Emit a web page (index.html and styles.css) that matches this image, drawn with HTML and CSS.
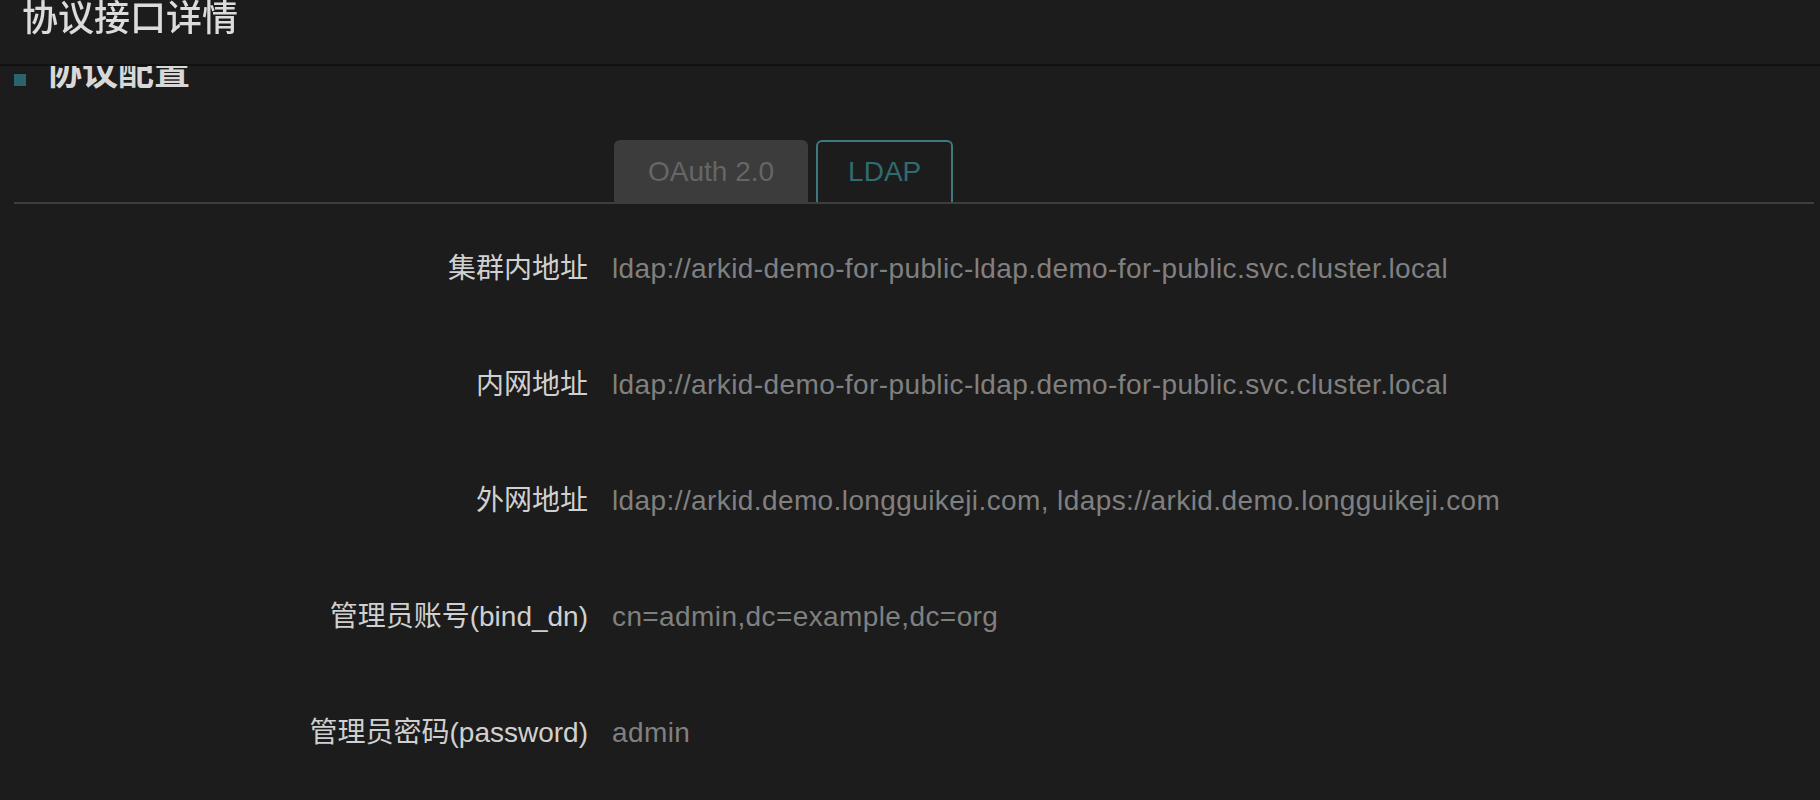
FILE: index.html
```html
<!DOCTYPE html>
<html lang="zh-CN">
<head>
<meta charset="utf-8">
<title>协议接口详情</title>
<link rel="stylesheet" href="styles.css">
</head>
<body>
<header class="topbar">
  <h1 class="topbar-title">协议接口详情</h1>
</header>
<main class="content">
  <section class="panel">
    <h2 class="section-title"><span class="section-mark"></span>协议配置</h2>
    <div class="tabs">
      <button class="tab">OAuth 2.0</button>
      <button class="tab tab-active">LDAP</button>
    </div>
    <dl class="fields">
      <dt class="field-label">集群内地址</dt>
      <dd class="field-value">ldap://arkid-demo-for-public-ldap.demo-for-public.svc.cluster.local</dd>
      <dt class="field-label">内网地址</dt>
      <dd class="field-value">ldap://arkid-demo-for-public-ldap.demo-for-public.svc.cluster.local</dd>
      <dt class="field-label">外网地址</dt>
      <dd class="field-value">ldap://arkid.demo.longguikeji.com, ldaps://arkid.demo.longguikeji.com</dd>
      <dt class="field-label">管理员账号(bind_dn)</dt>
      <dd class="field-value">cn=admin,dc=example,dc=org</dd>
      <dt class="field-label">管理员密码(password)</dt>
      <dd class="field-value">admin</dd>
    </dl>
  </section>
</main>
</body>
</html>
```
FILE: styles.css
```css
* {
  box-sizing: border-box;
}

html,
body {
  margin: 0;
  height: 100%;
  background: #1c1c1c;
  overflow: hidden;
}

body {
  font-family: "Liberation Sans", "Noto Sans CJK SC", sans-serif;
  color: #d0d0d0;
}

.topbar {
  position: fixed;
  top: 0;
  left: 0;
  right: 0;
  height: 66px;
  background: #1c1c1c;
  border-bottom: 2px solid #111;
  z-index: 10;
}

.topbar-title {
  margin: 0;
  padding-left: 22px;
  font-size: 36px;
  line-height: 38px;
  font-weight: 500;
  color: #dcdcdc;
}

.content {
  padding-top: 51px;
}

.panel {
  padding: 0 6px 0 14px;
}

.section-title {
  display: flex;
  align-items: center;
  gap: 20px;
  margin: 0;
  font-size: 36px;
  line-height: 44px;
  font-weight: 700;
  color: #d8d8d8;
}

.section-mark {
  width: 12px;
  height: 12px;
  margin-top: 14px;
  background: #2b6468;
  flex: none;
}

.tabs {
  display: flex;
  gap: 8px;
  margin-top: 45px;
  padding-left: 600px;
  border-bottom: 2px solid #3d3d3d;
}

.tab {
  height: 62px;
  padding: 0 32px;
  border: 2px solid #3c3c3c;
  border-bottom: none;
  border-radius: 6px 6px 0 0;
  background: #3c3c3c;
  color: #666;
  font-family: inherit;
  font-size: 28px;
  line-height: 58px;
}

.tab-active {
  background: #1c1c1c;
  border-color: #3d7a80;
  color: #2f6b70;
  padding: 0 30px;
}

.fields {
  display: grid;
  grid-template-columns: 598px 1fr;
  row-gap: 76px;
  margin: 45px 0 0;
  font-size: 28px;
  line-height: 40px;
}

.field-label {
  text-align: right;
  padding-right: 24px;
  color: #d0d0d0;
}

.field-value {
  margin: 0;
  color: #808080;
  letter-spacing: 0.4px;
}
```
